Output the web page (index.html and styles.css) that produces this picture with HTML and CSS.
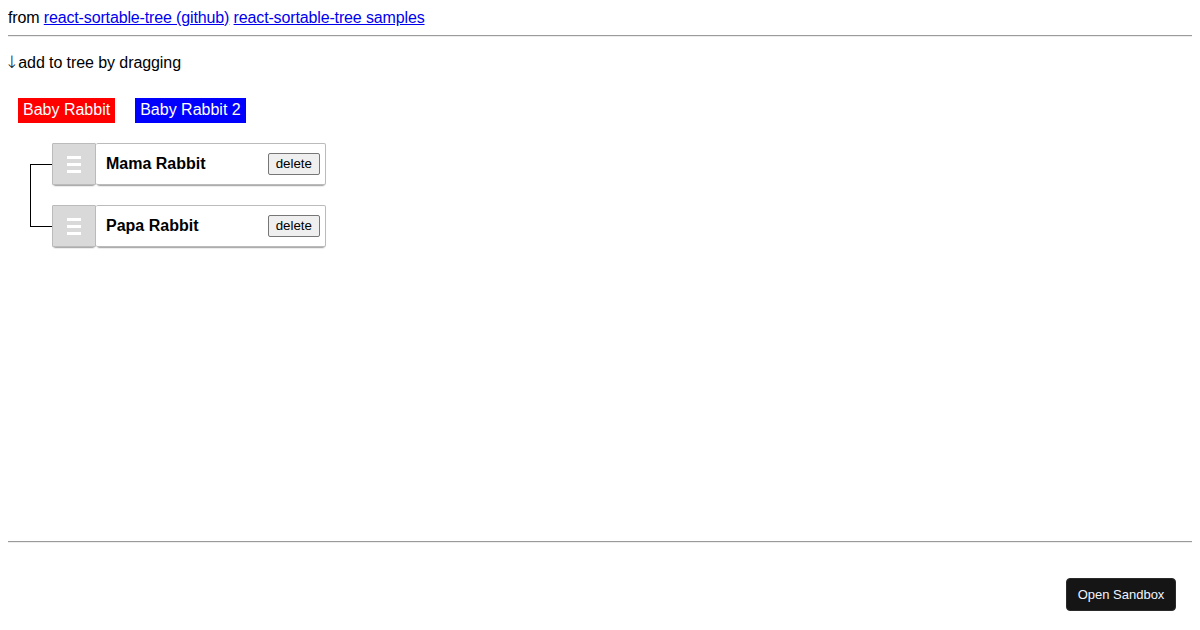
FILE: index.html
```html
<!DOCTYPE html>
<html>
<head>
<meta charset="utf-8">
<link rel="stylesheet" href="styles.css">
</head>
<body>
<div class="header">from <a href="#">react-sortable-tree (github)</a> <a href="#">react-sortable-tree samples</a></div>
<hr class="rule">
<p class="hint"><span class="arrow">↓</span>add to tree by dragging</p>
<div class="externals">
  <span class="ext red">Baby Rabbit</span>
  <span class="ext blue">Baby Rabbit 2</span>
</div>
<div class="tree">
  <div class="row">
    <div class="scaffold first"></div>
    <div class="node">
      <div class="handle"><svg width="14" height="17" viewBox="0 0 14 17"><rect x="0" y="0" width="14" height="3" fill="#fff"/><rect x="0" y="7" width="14" height="3" fill="#fff"/><rect x="0" y="14" width="14" height="3" fill="#fff"/></svg></div>
      <div class="content"><span class="title">Mama Rabbit</span><button class="del">delete</button></div>
    </div>
  </div>
  <div class="row">
    <div class="scaffold last"></div>
    <div class="node">
      <div class="handle"><svg width="14" height="17" viewBox="0 0 14 17"><rect x="0" y="0" width="14" height="3" fill="#fff"/><rect x="0" y="7" width="14" height="3" fill="#fff"/><rect x="0" y="14" width="14" height="3" fill="#fff"/></svg></div>
      <div class="content"><span class="title">Papa Rabbit</span><button class="del">delete</button></div>
    </div>
  </div>
</div>
<hr class="rule">
<a class="sandbox" href="#">Open Sandbox</a>
</body>
</html>
```

FILE: styles.css
```css
html, body { margin: 0; padding: 0; }
body {
  margin: 8px;
  font-family: "Liberation Sans", Arial, sans-serif;
  font-size: 16px;
  color: #000;
  background: #fff;
}
a { color: #0000ee; }
.header { line-height: 19px; letter-spacing: -0.14px; }
.rule {
  margin: 8px 0;
  border: none;
  border-top: 1px solid #9a9a9a;
  border-bottom: 1px solid #eee;
  height: 0;
}
.hint { margin: 16px 0; line-height: 19px; letter-spacing: -0.08px; }
.arrow {
  font-family: "DejaVu Sans", sans-serif;
  font-weight: 200;
  font-size: 17px;
  letter-spacing: 0;
  margin-left: -3.5px;
  margin-right: -0.5px;
}
.externals {
  display: flex;
  padding-top: 10px;
  height: 25px;
}
.ext {
  display: inline-block;
  margin: 0 10px;
  padding: 0 5px;
  height: 25px;
  line-height: 24px;
  color: #fff;
}
.red { background: #ff0000; }
.blue { background: #0000ff; }
.tree {
  margin-top: 10px;
  height: 400px;
}
.row {
  display: flex;
  height: 62px;
}
.scaffold {
  position: relative;
  width: 44px;
  height: 62px;
  flex: none;
}
.scaffold::before {
  content: "";
  position: absolute;
  left: 22px;
  width: 1px;
  background: #000;
}
.scaffold::after {
  content: "";
  position: absolute;
  left: 22px;
  top: 31px;
  width: 22px;
  height: 1px;
  background: #000;
}
.scaffold.first::before { top: 31px; height: 31px; }
.scaffold.last::before { top: 0; height: 32px; }
.node {
  display: flex;
  padding: 10px 10px 10px 0;
  height: 42px;
}
.handle {
  width: 42px;
  height: 40px;
  background: #d9d9d9;
  border: 1px solid #bbb;
  box-shadow: 0 2px 2px -2px;
  border-radius: 1px;
  display: flex;
  align-items: center;
  justify-content: center;
}
.content {
  display: flex;
  align-items: center;
  justify-content: space-between;
  width: 214px;
  height: 40px;
  padding: 0 5px 0 10px;
  border: 1px solid #bbb;
  border-left: none;
  box-shadow: 0 2px 2px -2px;
  border-radius: 2px;
  background: #fff;
}
.title { font-weight: bold; font-size: 16px; }
.del {
  font-family: "Liberation Sans", Arial, sans-serif;
  font-size: 13.33px;
  padding: 1px 7px;
  height: 22px;
  border: 1px solid #767676;
  border-radius: 2px;
  background: #efefef;
  color: #000;
  margin-bottom: 1px;
}
.sandbox {
  position: fixed;
  right: 24px;
  bottom: 19px;
  width: 110px;
  height: 33px;
  box-sizing: border-box;
  background: #151515;
  color: #f0f4ff;
  border-radius: 4px;
  border: 1px solid #2a2a2a;
  font-size: 13px;
  text-decoration: none;
  display: flex;
  align-items: center;
  justify-content: center;
}
```
